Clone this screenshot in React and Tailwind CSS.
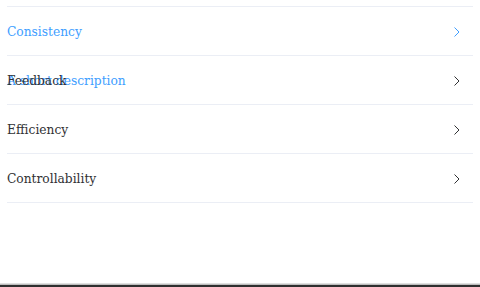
import React from "react";

function Chevron({ color }) {
  return (
    <svg width="12" height="14" viewBox="0 0 12 14" fill="none" className="shrink-0">
      <path d="M3.5 2.5 L8 7 L3.5 11.5" stroke={color} strokeWidth="1" />
    </svg>
  );
}

function Row({ label, active, overlay }) {
  return (
    <div className="relative flex h-[49px] items-center justify-between border-b border-[#ebeef5] pr-[10px] pt-[1px]">
      {overlay && (
        <span className="absolute left-0 top-1/2 -translate-y-1/2 pt-[1px] text-[#409eff]">{overlay}</span>
      )}
      <span className={"relative " + (active ? "text-[#409eff]" : "text-[#303133]")}>{label}</span>
      <Chevron color={active ? "#409eff" : "#303133"} />
    </div>
  );
}

export default function App() {
  return (
    <div className="relative h-[287px] w-[480px] overflow-hidden bg-white" style={{ fontFamily: '"DejaVu Serif Condensed", "DejaVu Serif", serif' }}>
      <div className="mx-[7px] mt-[6px] border-t border-[#ebeef5] text-[13.6px]">
        <Row label="Consistency" active />
        <Row label="Feedback" overlay="A short description" />
        <Row label="Efficiency" />
        <Row label="Controllability" />
      </div>
      <div className="absolute bottom-0 left-0 right-0 flex flex-col">
        <div className="h-px bg-[#e0e0e0]" />
        <div className="h-px bg-[#bdbdbd]" />
        <div className="h-[2px] bg-[#2f2f2f]" />
      </div>
    </div>
  );
}
